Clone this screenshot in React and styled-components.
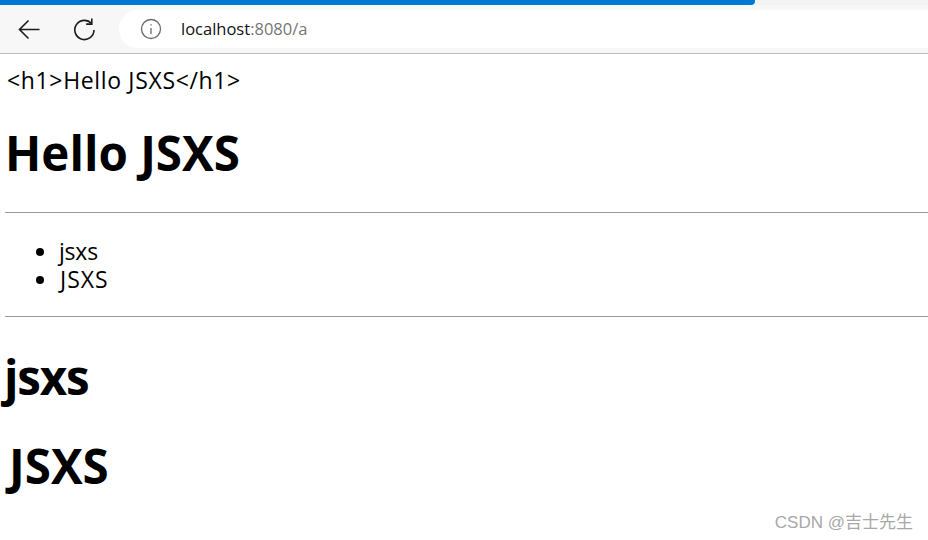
import React from 'react';
import styled, { createGlobalStyle } from 'styled-components';

const GlobalStyle = createGlobalStyle`
  html, body {
    margin: 0;
    padding: 0;
    background: #fff;
  }
  body {
    font-family: "Open Sans", "Noto Sans", sans-serif;
    color: #000;
  }
`;

const Page = styled.div`
  width: 928px;
  height: 540px;
  overflow: hidden;
  position: relative;
`;

const ProgressTrack = styled.div`
  height: 5px;
  background: #f3f3f3;
`;

const ProgressBar = styled.div`
  width: 755px;
  height: 5px;
  background: #0078d4;
  border-bottom-right-radius: 4px;
`;

const Toolbar = styled.div`
  height: 49px;
  box-sizing: border-box;
  display: flex;
  align-items: center;
  background: #f7f7f7;
  border-bottom: 1px solid #bdbdbd;
  padding: 0 0 1px 16px;
`;

const NavIcon = styled.svg`
  width: 26px;
  height: 26px;
  margin-right: ${(p) => p.$gap}px;
  fill: none;
  stroke: #1c1c1c;
  stroke-width: 1.6;
`;

const AddressBar = styled.div`
  flex: 1;
  height: 38px;
  display: flex;
  align-items: center;
  background: #fff;
  border-radius: 19px 0 0 19px;
  padding-left: 21px;
`;

const InfoIcon = styled.svg`
  width: 22px;
  height: 22px;
  margin-right: 19px;
  fill: none;
  stroke: #6a6a6a;
  stroke-width: 1.3;
`;

const Url = styled.span`
  font-size: 16.5px;
  color: #111;
  span {
    color: #767676;
  }
`;

const Content = styled.div`
  padding: 12px 5px 0;
`;

const CodeLine = styled.div`
  font-size: 23px;
  line-height: 28px;
  padding-left: 2px;
  letter-spacing: 0.65px;
`;

const Title = styled.h1`
  font-size: 47.5px;
  line-height: 60px;
  font-weight: 700;
  margin: 29px 0 29px 0;
`;

const Rule = styled.hr`
  height: 1px;
  border: 0;
  background: #9a9a9a;
  margin: 0 -5px 0 0;
`;

const List = styled.ul`
  margin: 24px 0 23px;
  padding: 0 0 0 54px;
  font-size: 23px;
  line-height: 28px;
`;

const Item = styled.li`
  letter-spacing: ${(p) => p.$spacing || 0}px;
  padding-left: ${(p) => p.$indent || 0}px;
`;

const SubTitle = styled.h2`
  font-size: 47.5px;
  line-height: 60px;
  font-weight: 700;
  margin: 0 0 29px ${(p) => p.$indent}px;
  letter-spacing: ${(p) => p.$spacing}px;
  &:first-of-type {
    margin-top: 30px;
  }
`;

const Watermark = styled.div`
  position: absolute;
  right: 15px;
  bottom: 7px;
  font-family: "Liberation Sans", "Noto Sans CJK SC", sans-serif;
  font-size: 17px;
  color: #a8a8a8;
`;

const App = () => (
  <Page>
    <GlobalStyle />
    <ProgressTrack>
      <ProgressBar />
    </ProgressTrack>
    <Toolbar>
      <NavIcon $gap={29} viewBox="0 0 26 26">
        <path d="M23.5 13.5H3.5M12.5 4.5l-9 9 9 9" />
      </NavIcon>
      <NavIcon $gap={22} viewBox="0 0 26 26">
        <path d="M20.5 7.5A9.6 9.6 0 1 0 23 14" />
        <path d="M20.8 2.5v5.6h-5.6" />
      </NavIcon>
      <AddressBar>
        <InfoIcon viewBox="0 0 22 22">
          <circle cx="11" cy="11" r="9.5" />
          <path d="M11 10v6" />
          <path d="M11 6.2v1.4" />
        </InfoIcon>
        <Url>
          localhost<span>:8080/a</span>
        </Url>
      </AddressBar>
    </Toolbar>
    <Content>
      <CodeLine>{'<h1>Hello JSXS</h1>'}</CodeLine>
      <Title>Hello JSXS</Title>
      <Rule />
      <List>
        <Item $spacing={-0.2}>jsxs</Item>
        <Item $spacing={1} $indent={1}>JSXS</Item>
      </List>
      <Rule />
      <SubTitle $indent={-1} $spacing={-1.2}>jsxs</SubTitle>
      <SubTitle $indent={4} $spacing={0}>JSXS</SubTitle>
    </Content>
    <Watermark>CSDN @吉士先生</Watermark>
  </Page>
);

export default App;
